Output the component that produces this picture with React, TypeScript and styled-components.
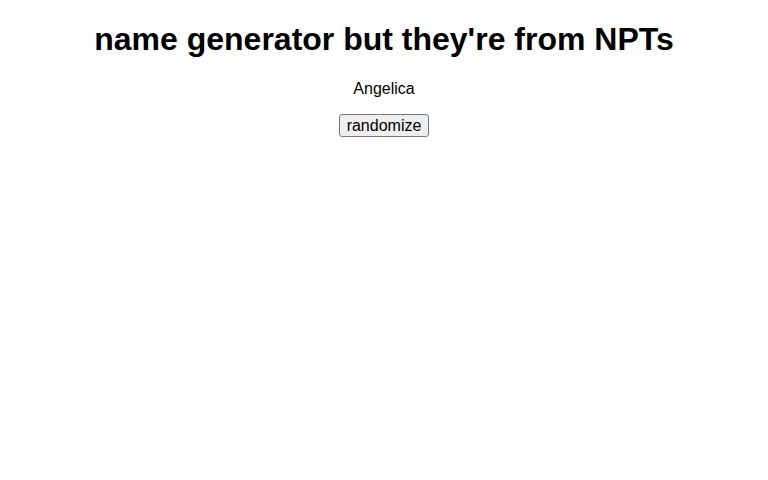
import { useState } from 'react';
import styled, { createGlobalStyle } from 'styled-components';

const names = ['Angelica', 'Jocelyn', 'Brittany', 'Marcus', 'Devon', 'Tiffany', 'Kendra'];

const GlobalStyle = createGlobalStyle`
    body {
        margin: 0;
        font-family: 'Liberation Sans', Arial, sans-serif;
        background: #ffffff;
        color: #000000;
    }
`;

const Page = styled.div`
    text-align: center;
`;

const Title = styled.h1`
    font-size: 32px;
    font-weight: bold;
    margin: 21.44px 0;
`;

const Name = styled.p`
    font-size: 16px;
    margin: 16px 0;
`;

const ButtonRow = styled.p`
    margin: 16px 0;
`;

const RandomButton = styled.button`
    font-family: inherit;
    font-size: 16px;
    line-height: 19px;
    color: #000000;
    padding: 1px 7px;
    border: 1px solid #767676;
    border-radius: 3px;
    background: #efefef;
    cursor: pointer;

    &:hover {
        background: #e5e5e5;
    }
`;

export default function App() {
    const [name, setName] = useState('Angelica');

    const randomize = () => {
        setName(names[Math.floor(Math.random() * names.length)]);
    };

    return (
        <Page>
            <GlobalStyle />
            <Title>name generator but they're from NPTs</Title>
            <Name>{name}</Name>
            <ButtonRow>
                <RandomButton onClick={randomize}>randomize</RandomButton>
            </ButtonRow>
        </Page>
    );
}
